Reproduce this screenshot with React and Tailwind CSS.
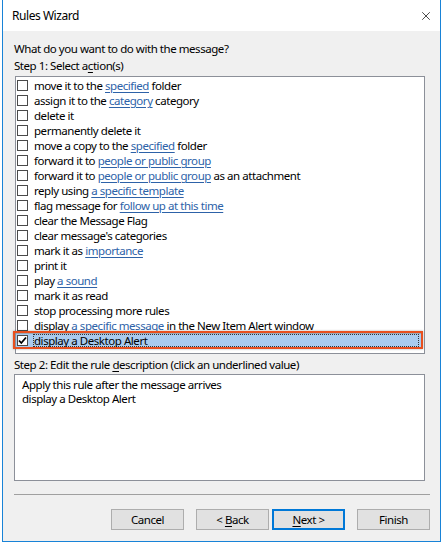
import { X } from "lucide-react";

// each action is a list of plain strings and { link } parts
const actions = [
  ["move it to the ", { link: "specified" }, " folder"],
  ["assign it to the ", { link: "category" }, " category"],
  ["delete it"],
  ["permanently delete it"],
  ["move a copy to the ", { link: "specified" }, " folder"],
  ["forward it to ", { link: "people or public group" }],
  ["forward it to ", { link: "people or public group" }, " as an attachment"],
  ["reply using ", { link: "a specific template" }],
  ["flag message for ", { link: "follow up at this time" }],
  ["clear the Message Flag"],
  ["clear message's categories"],
  ["mark it as ", { link: "importance" }],
  ["print it"],
  ["play ", { link: "a sound" }],
  ["mark it as read"],
  ["stop processing more rules"],
  ["display ", { link: "a specific message" }, " in the New Item Alert window"],
  ["display a Desktop Alert"],
];

function Label({ parts }) {
  return parts.map((p, i) =>
    typeof p === "string" ? (
      <span key={i} className="whitespace-pre">{p}</span>
    ) : (
      <span key={i} className="whitespace-pre text-[#2d62a8] underline underline-offset-2">{p.link}</span>
    )
  );
}

function Checkbox({ checked }) {
  return (
    <div className="w-[11px] h-[11px] border border-[#4a4a4a] bg-white flex items-center justify-center shrink-0">
      {checked && (
        <svg width="9" height="9" viewBox="0 0 9 9">
          <path d="M1 4.5 L3.3 7 L8 1.5" fill="none" stroke="#000" strokeWidth="1.8" />
        </svg>
      )}
    </div>
  );
}

function Button({ children, primary }) {
  return (
    <button
      className={`w-[73px] h-[21px] bg-[#e1e1e1] text-black flex items-center justify-center ${
        primary ? "border-2 border-[#0078d7]" : "border border-[#adadad]"
      }`}
    >
      {children}
    </button>
  );
}

export default function App() {
  const last = actions.length - 1;

  return (
    <div
      className="w-[443px] h-[543px] bg-white text-black text-[11.5px] tracking-[-0.45px]"
      style={{ fontFamily: '"Noto Sans", "Open Sans", sans-serif' }}
    >
      <div className="ml-[2px] w-[439px] h-[542px] border-x border-b border-[#1883d7] flex flex-col">

        {/* Title bar */}
        <div className="h-[31px] bg-white flex items-center justify-between pl-[9px] pr-[7px] shrink-0">
          <span className="text-[12px]">Rules Wizard</span>
          <X size={14} strokeWidth={1.2} className="text-black" />
        </div>

        {/* Body */}
        <div className="flex-1 bg-[#f0f0f0] pl-[11px] pt-[10px] flex flex-col">
          <div className="h-[16px] leading-[16px]">What do you want to do with the message?</div>
          <div className="h-[16px] leading-[16px] mt-[1px]">
            Step 1: Select a<span className="underline underline-offset-2">c</span>tion(s)
          </div>

          {/* Actions list */}
          <div className="mt-[2px] ml-[1px] w-[410px] h-[278px] border border-[#8c9099] bg-white pt-[1px]">
            {actions.map((parts, i) =>
              i === last ? (
                <div key={i} className="relative h-[15px]">
                  <div className="absolute -left-[3px] -top-[2px] w-[410px] h-[18px] border-2 border-[#e8501e] shadow-[0_0_2px_rgba(0,0,0,0.35)]" />
                  <div className="h-[15px] w-[405px] bg-[#a9cbee] border-y border-[#9aa8b8] flex items-center pl-[1px]">
                    <Checkbox checked />
                    <div className="ml-[5px] h-[13px] flex-1 mr-[2px] border border-dotted border-[#333] flex items-center leading-[13px]">
                      <Label parts={parts} />
                    </div>
                  </div>
                </div>
              ) : (
                <div key={i} className="h-[15px] flex items-center pl-[1px] leading-[15px]">
                  <Checkbox />
                  <div className="ml-[6px]">
                    <Label parts={parts} />
                  </div>
                </div>
              )
            )}
          </div>

          <div className="h-[16px] leading-[16px] mt-[3px]">
            Step 2: Edit the rule <span className="underline underline-offset-2">d</span>escription (click an underlined value)
          </div>

          {/* Rule description */}
          <div className="mt-[1px] w-[411px] h-[107px] border border-[#8c9099] bg-white pl-[7px] pt-[3px] leading-[14px]">
            <div>Apply this rule after the message arrives</div>
            <div>display a Desktop Alert</div>
          </div>

          <div className="mt-[13px] w-[416px] border-t border-[#a0a0a0]" />

          {/* Buttons */}
          <div className="mt-[14px] w-[416px] flex justify-end items-center">
            <Button>Cancel</Button>
            <div className="ml-[12px]">
              <Button>
                &lt;&nbsp;<span className="underline underline-offset-2">B</span>ack
              </Button>
            </div>
            <div className="ml-[3px]">
              <Button primary>
                <span className="underline underline-offset-2">N</span>ext&nbsp;&gt;
              </Button>
            </div>
            <div className="ml-[12px]">
              <Button>Finish</Button>
            </div>
          </div>
        </div>
      </div>
    </div>
  );
}
